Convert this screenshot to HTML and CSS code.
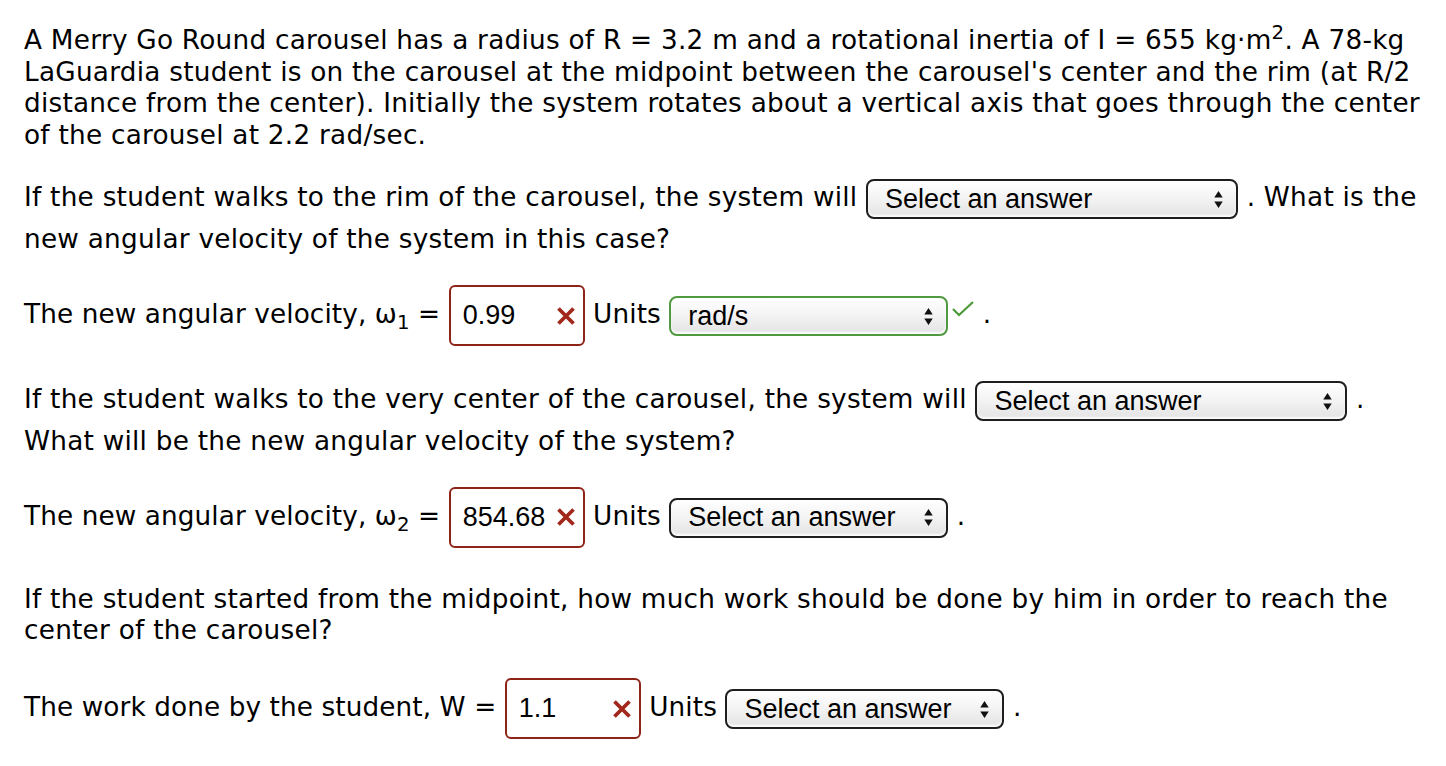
FILE: index.html
```html
<!DOCTYPE html>
<html>
<head>
<meta charset="utf-8">
<link rel="stylesheet" href="styles.css">
</head>
<body>
<div class="question">
  <p class="para intro">A Merry Go Round carousel has a radius of R = 3.2 m and a rotational inertia of I = 655 kg·m<sup>2</sup>. A 78-kg LaGuardia student is on the carousel at the midpoint between the carousel's center and the rim (at R/2 distance from the center). Initially the system rotates about a vertical axis that goes through the center of the carousel at 2.2 rad/sec.</p>

  <p class="para part">If the student walks to the rim of the carousel, the system will <span class="select wide"><span class="select-text">Select an answer</span><svg class="arrows" viewBox="0 0 10 18"><path d="M1 7 L5 1 L9 7 Z M1 11 L5 17 L9 11 Z"/></svg></span> . What is the new angular velocity of the system in this case?</p>

  <p class="para row row-first">The new angular velocity, ω<sub>1</sub> = <span class="answer wrong"><span class="val">0.99</span><svg class="cross" viewBox="0 0 18 18"><path d="M1.5 1.5 L16.5 16.5 M16.5 1.5 L1.5 16.5"/></svg></span> Units <span class="select correct"><span class="select-text">rad/s</span><svg class="arrows" viewBox="0 0 10 18"><path d="M1 7 L5 1 L9 7 Z M1 11 L5 17 L9 11 Z"/></svg></span><svg class="check" viewBox="0 0 22 16"><path d="M1 8 L7 14 L21 1"/></svg> .</p>

  <p class="para part">If the student walks to the very center of the carousel, the system will <span class="select wide"><span class="select-text">Select an answer</span><svg class="arrows" viewBox="0 0 10 18"><path d="M1 7 L5 1 L9 7 Z M1 11 L5 17 L9 11 Z"/></svg></span> . What will be the new angular velocity of the system?</p>

  <p class="para row row-second">The new angular velocity, ω<sub>2</sub> = <span class="answer wrong"><span class="val">854.68</span><svg class="cross" viewBox="0 0 18 18"><path d="M1.5 1.5 L16.5 16.5 M16.5 1.5 L1.5 16.5"/></svg></span> Units <span class="select"><span class="select-text">Select an answer</span><svg class="arrows" viewBox="0 0 10 18"><path d="M1 7 L5 1 L9 7 Z M1 11 L5 17 L9 11 Z"/></svg></span> .</p>

  <p class="para plain">If the student started from the midpoint, how much work should be done by him in order to reach the center of the carousel?</p>

  <p class="para row row-last">The work done by the student, W = <span class="answer wrong"><span class="val">1.1</span><svg class="cross" viewBox="0 0 18 18"><path d="M1.5 1.5 L16.5 16.5 M16.5 1.5 L1.5 16.5"/></svg></span> Units <span class="select"><span class="select-text">Select an answer</span><svg class="arrows" viewBox="0 0 10 18"><path d="M1 7 L5 1 L9 7 Z M1 11 L5 17 L9 11 Z"/></svg></span> .</p>
</div>
</body>
</html>
```
FILE: styles.css
```css
html, body {
  margin: 0;
  padding: 0;
  background: #fff;
}
body {
  font-family: "DejaVu Sans", "Noto Sans", sans-serif;
  font-size: 26.3px;
  line-height: 31.7px;
  letter-spacing: 0.25px;
  color: #000;
}
.question {
  padding: 25px 13px 0 24px;
}
.para {
  margin: 0;
}
.intro { margin-bottom: 21.5px; }
.part { margin-bottom: 29px; }
.row-first { margin-bottom: 29px; }
.row-second { margin-bottom: 36px; }
.plain { margin-bottom: 31px; }
.row { letter-spacing: 0.1px; }
sup, sub {
  font-size: 0.75em;
  line-height: 0;
}
.select {
  display: inline-flex;
  align-items: center;
  justify-content: space-between;
  box-sizing: border-box;
  width: 279px;
  height: 40px;
  margin: 6px 0 5px 0;
  padding: 0 12px 0 17px;
  border: 2px solid #1e1e1e;
  border-radius: 8px;
  background: linear-gradient(#ffffff 0%, #f4f4f4 45%, #e3e3e3 100%);
  box-shadow: inset 0 -2px 2px rgba(255,255,255,0.9);
  vertical-align: middle;
  font-family: "Liberation Sans", Arial, sans-serif;
  font-size: 27px;
  line-height: 1;
  letter-spacing: 0;
}
.select.wide { width: 372px; }
.select.correct { border-color: #4f9a3f; }
.arrows {
  width: 11px;
  height: 19px;
  fill: #111;
}
.answer {
  display: inline-flex;
  align-items: center;
  justify-content: space-between;
  box-sizing: border-box;
  width: 136px;
  height: 61px;
  padding: 0 8px 0 12px;
  border: 2px solid #8e2417;
  border-radius: 6px;
  vertical-align: middle;
  font-family: "Liberation Sans", Arial, sans-serif;
  font-size: 27px;
  line-height: 1;
  letter-spacing: 0;
}
.cross {
  width: 18px;
  height: 18px;
  stroke: #a1281b;
  stroke-width: 3.8;
  fill: none;
}
.check {
  width: 22px;
  height: 16px;
  stroke: #4c9a3a;
  stroke-width: 2.2;
  fill: none;
  vertical-align: 6px;
  margin-left: 4px;
}
```
